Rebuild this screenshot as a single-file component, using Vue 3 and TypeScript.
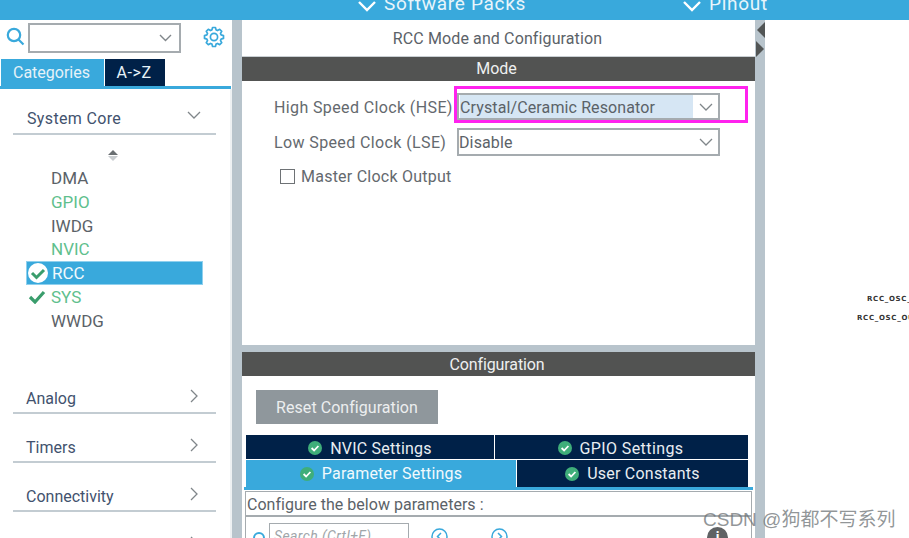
<script setup lang="ts">
const items = [
  { name: 'DMA', state: '' },
  { name: 'GPIO', state: 'ok' },
  { name: 'IWDG', state: '' },
  { name: 'NVIC', state: 'ok' },
  { name: 'RCC', state: 'active' },
  { name: 'SYS', state: 'checked' },
  { name: 'WWDG', state: '' },
]
const groups = ['Analog', 'Timers', 'Connectivity', 'Computing']

function gearPath(teeth: number, outer: number, inner: number, c: number): string {
  const pts: string[] = []
  const step = (Math.PI * 2) / teeth
  for (let i = 0; i < teeth; i++) {
    const a = i * step
    const offsets: [number, number][] = [
      [-0.3, inner],
      [-0.16, outer],
      [0.16, outer],
      [0.3, inner],
    ]
    for (const [o, r] of offsets) {
      const t = a + o * step * 1.2
      pts.push(`${(c + r * Math.cos(t)).toFixed(2)} ${(c + r * Math.sin(t)).toFixed(2)}`)
    }
  }
  return 'M' + pts.join('L') + 'Z'
}
const gear = gearPath(8, 9.6, 7.4, 11)
</script>

<template>
  <div class="page">
    <header class="topbar">
      <div class="top-item sp">
        <svg width="20" height="12" viewBox="0 0 20 12"><path d="M2 1l8 8 8-8" fill="none" stroke="#fff" stroke-width="2.4" /></svg>
        <span>Software Packs</span>
      </div>
      <div class="top-item po">
        <svg width="20" height="12" viewBox="0 0 20 12"><path d="M2 1l8 8 8-8" fill="none" stroke="#fff" stroke-width="2.4" /></svg>
        <span>Pinout</span>
      </div>
    </header>

    <div class="main">
      <aside class="side">
        <div class="search-row">
          <svg class="lens" width="19" height="19" viewBox="0 0 19 19"><circle cx="8" cy="8" r="6.2" fill="none" stroke="#39a9dc" stroke-width="2.2" /><path d="M12.5 12.5l5 5" stroke="#39a9dc" stroke-width="2.2" /></svg>
          <div class="combo">
            <svg width="13" height="8" viewBox="0 0 13 8"><path d="M1 1l5.5 5.5L12 1" fill="none" stroke="#80868a" stroke-width="1.4" /></svg>
          </div>
          <svg class="gear" width="22" height="22" viewBox="0 0 22 22">
            <path :d="gear" fill="none" stroke="#39a9dc" stroke-width="1.7" stroke-linejoin="round" />
            <circle cx="11" cy="11" r="3.6" fill="none" stroke="#39a9dc" stroke-width="1.7" />
          </svg>
        </div>
        <div class="side-tabs">
          <div class="stab on">Categories</div>
          <div class="stab off">A-&gt;Z</div>
        </div>
        <div class="side-body">
          <div class="group first">
            <span>System Core</span>
            <svg width="14" height="9" viewBox="0 0 14 9"><path d="M1 1l6 6 6-6" fill="none" stroke="#80868a" stroke-width="1.3" /></svg>
          </div>
          <div class="sorter">
            <i class="up"></i>
            <i class="down"></i>
          </div>
          <ul class="list">
            <li v-for="item in items" :key="item.name" class="row" :class="item.state">
              <svg v-if="item.state === 'active'" class="mark" width="22" height="22" viewBox="0 0 22 22">
                <circle cx="11" cy="11" r="10" fill="#fff" />
                <path d="M5 11l4.5 4.5L17 8" fill="none" stroke="#3a9d6c" stroke-width="3" />
              </svg>
              <svg v-if="item.state === 'checked'" class="mark" width="18" height="14" viewBox="0 0 18 14">
                <path d="M2 7l5 5 9-10" fill="none" stroke="#3a9d6c" stroke-width="3.2" />
              </svg>
              <span>{{ item.name }}</span>
            </li>
          </ul>
          <div class="groups">
            <div v-for="g in groups" :key="g" class="group">
              <span>{{ g }}</span>
              <svg width="9" height="14" viewBox="0 0 9 14"><path d="M1 1l6 6-6 6" fill="none" stroke="#80868a" stroke-width="1.3" /></svg>
            </div>
          </div>
        </div>
      </aside>

      <div class="gutter"></div>

      <section class="center">
        <div class="upper">
          <div class="title">RCC Mode and Configuration</div>
          <div class="bar mode">Mode</div>
          <div class="form">
            <div class="field first">
              <label>High Speed Clock (HSE)</label>
              <div class="select hl">
                <span class="value">Crystal/Ceramic Resonator</span>
                <span class="arrow"><svg width="14" height="8" viewBox="0 0 14 8"><path d="M1 1l6 6 6-6" fill="none" stroke="#80868a" stroke-width="1.3" /></svg></span>
              </div>
              <div class="highlight"></div>
            </div>
            <div class="field second">
              <label>Low Speed Clock (LSE)</label>
              <div class="select">
                <span class="value">Disable</span>
                <span class="arrow"><svg width="14" height="8" viewBox="0 0 14 8"><path d="M1 1l6 6 6-6" fill="none" stroke="#80868a" stroke-width="1.3" /></svg></span>
              </div>
            </div>
            <div class="check">
              <span class="box"></span>
              <span>Master Clock Output</span>
            </div>
          </div>
        </div>

        <div class="hgutter"></div>

        <div class="lower">
          <div class="bar conf">Configuration</div>
          <div class="lower-body">
            <button class="reset">Reset Configuration</button>
            <div class="tabs">
              <div class="tab-row r1">
                <div class="tab navy">
                  <svg class="ok" width="14" height="14" viewBox="0 0 14 14"><circle cx="7" cy="7" r="7" fill="#3fae7a" /><path d="M3.6 7l2.5 2.5 4.3-4.5" fill="none" stroke="#fff" stroke-width="1.8" /></svg>
                  NVIC Settings
                </div>
                <div class="tab navy">
                  <svg class="ok" width="14" height="14" viewBox="0 0 14 14"><circle cx="7" cy="7" r="7" fill="#3fae7a" /><path d="M3.6 7l2.5 2.5 4.3-4.5" fill="none" stroke="#fff" stroke-width="1.8" /></svg>
                  GPIO Settings
                </div>
              </div>
              <div class="tab-row r2">
                <div class="tab blue">
                  <svg class="ok" width="14" height="14" viewBox="0 0 14 14"><circle cx="7" cy="7" r="7" fill="#3fae7a" /><path d="M3.6 7l2.5 2.5 4.3-4.5" fill="none" stroke="#fff" stroke-width="1.8" /></svg>
                  Parameter Settings
                </div>
                <div class="tab navy">
                  <svg class="ok" width="14" height="14" viewBox="0 0 14 14"><circle cx="7" cy="7" r="7" fill="#3fae7a" /><path d="M3.6 7l2.5 2.5 4.3-4.5" fill="none" stroke="#fff" stroke-width="1.8" /></svg>
                  User Constants
                </div>
              </div>
              <div class="tab-line"></div>
            </div>
            <div class="params">
              <div class="params-head">Configure the below parameters :</div>
              <div class="params-tools">
                <svg class="find" width="14" height="14" viewBox="0 0 14 14"><circle cx="7" cy="7" r="5" fill="none" stroke="#39a9dc" stroke-width="2" /></svg>
                <div class="search">Search (Crtl+F)</div>
                <svg class="nav n1" width="17" height="17" viewBox="0 0 17 17"><circle cx="8.5" cy="8.5" r="7.5" fill="none" stroke="#39a9dc" stroke-width="1.5" /><path d="M10 5L6.5 8.5 10 12" fill="none" stroke="#39a9dc" stroke-width="1.5" /></svg>
                <svg class="nav n2" width="17" height="17" viewBox="0 0 17 17"><circle cx="8.5" cy="8.5" r="7.5" fill="none" stroke="#39a9dc" stroke-width="1.5" /><path d="M7 5l3.5 3.5L7 12" fill="none" stroke="#39a9dc" stroke-width="1.5" /></svg>
                <span class="info">i</span>
              </div>
            </div>
          </div>
        </div>
      </section>

      <div class="gutter right">
        <i class="tri left"></i>
        <i class="tri rightward"></i>
      </div>

      <section class="canvas">
        <span class="pin p1">RCC_OSC_IN</span>
        <span class="pin p2">RCC_OSC_OUT</span>
      </section>
    </div>

    <div class="watermark">CSDN @狗都不写系列</div>
  </div>
</template>

<style>
html, body { margin: 0; background: #fff; }
</style>

<style scoped>
* { box-sizing: border-box; }
.page {
  position: relative;
  width: 909px;
  height: 538px;
  overflow: hidden;
  background: #fff;
  font-family: Roboto, "Liberation Sans", sans-serif;
  font-size: 16px;
  color: #5c6670;
}
.topbar {
  height: 20px;
  background: #39a9dc;
  display: flex;
  overflow: hidden;
  color: #e8f5fb;
  font-size: 19px;
  letter-spacing: 0.7px;
}
.top-item {
  display: flex;
  align-items: flex-end;
  gap: 7px;
  height: 20px;
  line-height: 20px;
}
.top-item svg { margin-bottom: 7px; flex: none; }
.top-item span { position: relative; top: -6px; }
.sp { margin-left: 357px; }
.po { margin-left: 156px; }
.main {
  display: flex;
  height: 518px;
}
.side {
  width: 232px;
  flex: none;
  display: flex;
  flex-direction: column;
}
.search-row {
  height: 39px;
  display: flex;
  align-items: flex-start;
  padding: 3px 0 0 6px;
}
.lens { margin-top: 4px; flex: none; }
.combo {
  width: 153px;
  height: 30px;
  margin-left: 3px;
  border: 2px solid #a5abaf;
  display: flex;
  align-items: center;
  justify-content: flex-end;
  padding-right: 7px;
}
.gear { margin: 3px 0 0 22px; flex: none; }
.side-tabs {
  height: 30px;
  width: 231px;
  display: flex;
  gap: 1px;
  padding-left: 1px;
  border-bottom: 3px solid #39a9dc;
}
.stab {
  height: 27px;
  line-height: 27px;
  text-align: center;
  color: #e6f2f8;
}
.stab.on { width: 103px; background: #39a9dc; padding-right: 2px; }
.stab.off { width: 60px; background: #002148; letter-spacing: 0.6px; padding-right: 2px; }
.side-body {
  flex: 1;
  min-height: 0;
  border-right: 2px solid #eef1f3;
  overflow: hidden;
}
.group {
  margin: 0 14px 0 13px;
  height: 49px;
  border-bottom: 2px solid #c3ccd2;
  display: flex;
  align-items: flex-end;
  justify-content: space-between;
  padding: 0 17px 4px 13px;
  color: #42526e;
  line-height: 19px;
}
.group svg { margin-bottom: 5px; }
.group.first {
  height: 46px;
  padding: 0 15px 5px 14px;
  letter-spacing: 0.35px;
}
.group.first svg { margin-bottom: 8px; }
.sorter {
  height: 31px;
  padding-top: 15px;
  display: flex;
  flex-direction: column;
  align-items: center;
  gap: 1px;
  width: 226px;
}
.sorter i { width: 0; height: 0; border-left: 5px solid transparent; border-right: 5px solid transparent; }
.up { border-bottom: 5px solid #6a6f72; }
.down { border-top: 5px solid #c8cccf; }
.list {
  list-style: none;
  margin: 0;
  padding: 0 0 0 26px;
  width: 203px;
  font-size: 17px;
}
.row {
  position: relative;
  height: 23.8px;
  line-height: 24px;
  padding-left: 25px;
  color: #5b6268;
}
.row.ok, .row.checked { color: #5fc08d; }
.row.active { background: #39a9dc; color: #f2f9fc; outline: 1px solid #8fd0ee; outline-offset: -1px; padding-left: 26px; }
.mark { position: absolute; left: 1px; top: 1px; }
.row.checked .mark { left: 2px; top: 5px; }
.groups { padding-top: 29.4px; }
.groups .group { height: 49px; }
.groups .group:first-child { height: 52px; }
.gutter {
  width: 10px;
  flex: none;
  background: #b8c4cc;
}
.gutter.right {
  position: relative;
  display: flex;
  flex-direction: column;
  padding-top: 2px;
  gap: 3px;
}
.tri {
  width: 0;
  height: 0;
  border-top: 8px solid transparent;
  border-bottom: 8px solid transparent;
}
.tri.left { border-right: 8px solid #525555; margin-left: 2px; }
.tri.rightward { border-left: 8px solid #525555; margin-left: 1px; }
.center {
  width: 513px;
  flex: none;
  display: flex;
  flex-direction: column;
}
.upper { height: 325px; }
.title {
  height: 37px;
  line-height: 37px;
  text-align: center;
  padding-right: 2px;
  letter-spacing: 0.12px;
  border-bottom: 1px solid #c9cfd3;
  color: #5b6268;
}
.bar {
  height: 24px;
  line-height: 24px;
  background: #525352;
  color: #eef0f0;
  text-align: center;
}
.bar.mode { padding-right: 4px; }
.bar.conf { padding-right: 3px; line-height: 26px; letter-spacing: -0.1px; }
.form { padding: 12px 0 0 32px; position: relative; }
.field {
  position: relative;
  display: flex;
  align-items: center;
  height: 27px;
  margin-bottom: 8px;
}
.field.second { height: 28px; }
.field label {
  width: 183px;
  flex: none;
  letter-spacing: 0.38px;
  white-space: nowrap;
  color: #64696e;
}
.field.first label { padding-top: 2px; }
.select {
  width: 263px;
  height: 100%;
  border: 2px solid #a5abaf;
  display: flex;
  align-items: center;
  justify-content: space-between;
  padding-left: 1px;
  color: #5b6268;
  letter-spacing: 0.12px;
}
.field.second .select { padding-left: 0; }
.value { flex: 1; line-height: 23px; }
.select.hl .value { background: #d6e6f4; padding-top: 2px; line-height: 21px; }
.arrow { width: 25px; display: flex; justify-content: center; }
.highlight {
  position: absolute;
  left: 180px;
  top: -7px;
  width: 294px;
  height: 37px;
  border: 3px solid #ff22ee;
  pointer-events: none;
}
.check {
  display: flex;
  align-items: center;
  gap: 6px;
  margin: -1px 0 0 6px;
  height: 26px;
  letter-spacing: 0.24px;
  color: #64696e;
}
.box {
  width: 15px;
  height: 15px;
  border: 1.5px solid #6e7275;
}
.hgutter { height: 7px; background: #b8c4cc; }
.lower { flex: 1; min-height: 0; }
.lower-body { padding: 14px 0 0 3px; }
.reset {
  display: block;
  width: 182px;
  height: 34px;
  margin: 0 0 11px 11px;
  border: 0;
  background: #8f979c;
  color: #eceeef;
  font: inherit;
  letter-spacing: 0.05px;
  padding: 0;
}
.tabs { width: 506px; position: relative; }
.tab-row {
  display: flex;
  gap: 1px;
  width: 502px;
  margin-left: 1px;
}
.r1 { height: 25px; }
.r2 { height: 27px; }
.r1 .tab { height: 24px; padding: 2px 0 0 0; }
.r1 .tab:first-child { width: 248px; }
.r1 .tab:last-child { width: 253px; padding-right: 2px; letter-spacing: 0.4px; }
.r2 .tab:first-child { width: 270px; }
.r2 .tab:last-child { width: 231px; }
.tab {
  display: flex;
  align-items: center;
  justify-content: center;
  gap: 8px;
  letter-spacing: 0.22px;
  color: #e9eef2;
  white-space: nowrap;
}
.navy { background: #002148; }
.blue { background: #39a9dc; color: #f2fafd; }
.tab-line { height: 3px; background: #39a9dc; width: 509px; margin-left: -1px; }
.params {
  margin-top: 1px;
  width: 507px;
  border-left: 1px solid #a5abaf;
  border-right: 1px solid #a5abaf;
}
.params-head {
  height: 26px;
  line-height: 26px;
  padding-left: 1px;
  border: 1px solid #a5abaf;
  border-width: 1px 0 2px;
  color: #5b6268;
  letter-spacing: 0.03px;
  white-space: nowrap;
}
.params-tools {
  display: flex;
  align-items: flex-start;
  padding: 6px 0 0 6px;
  height: 40px;
}
.find { margin-top: 8px; flex: none; }
.search {
  width: 140px;
  height: 26px;
  margin-left: 3px;
  border: 1px solid #a5abaf;
  padding-left: 4px;
  line-height: 24px;
  font-size: 14px;
  font-style: italic;
  color: #a0a6aa;
  letter-spacing: 0.4px;
}
.n1 { margin: 5px 0 0 22px; }
.n2 { margin: 5px 0 0 43px; }
.info {
  width: 21px;
  height: 21px;
  margin: 4px 0 0 199px;
  border-radius: 50%;
  background: #5f6264;
  color: #fff;
  font-weight: 700;
  font-size: 14px;
  line-height: 21px;
  text-align: center;
}
.canvas {
  flex: 1;
  position: relative;
  overflow: hidden;
}
.pin {
  position: absolute;
  font-size: 7px;
  font-weight: 700;
  color: #333;
  white-space: nowrap;
  letter-spacing: 0.7px;
  font-family: "DejaVu Sans", sans-serif;
}
.p1 { left: 102px; top: 275px; }
.p2 { left: 92px; top: 294px; }
.watermark {
  position: absolute;
  left: 703px;
  top: 508px;
  font-size: 19px;
  line-height: 24px;
  font-family: "Liberation Sans", "Noto Sans CJK SC", sans-serif;
  color: rgba(110, 115, 118, 0.75);
  white-space: nowrap;
}
</style>
